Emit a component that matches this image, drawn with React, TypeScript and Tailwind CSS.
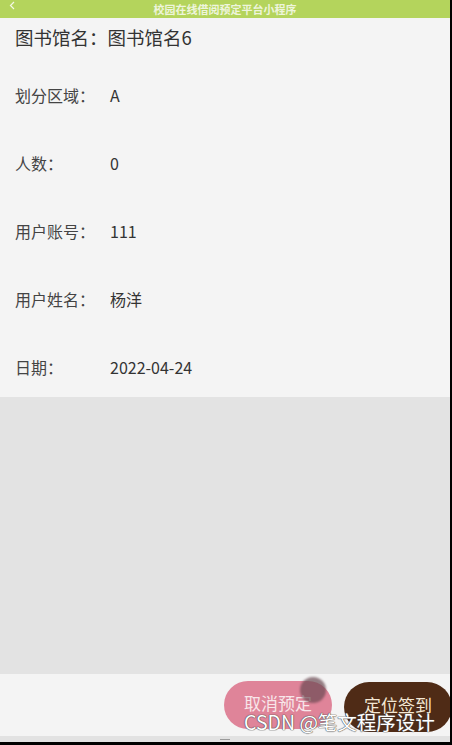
import React from "react";

const FONT = { fontFamily: '"Noto Sans CJK SC", "Noto Sans", sans-serif' };
const SERIF = { fontFamily: '"Liberation Serif", "Noto Sans CJK SC", serif' };

const rows: [string, string][] = [
  ["划分区域：", "A"],
  ["人数：", "0"],
  ["用户账号：", "111"],
  ["用户姓名：", "杨洋"],
  ["日期：", "2022-04-24"],
];

export default function App() {
  return (
    <div className="flex h-[745px] w-[452px] overflow-hidden bg-black" style={FONT}>
      <div className="relative flex w-[450px] flex-col">
        {/* Title bar */}
        <header className="relative flex h-[18px] items-center justify-center bg-[#b4d45c]">
          <svg className="absolute left-[8px] top-[1px]" width="9" height="9" viewBox="0 0 9 9">
            <path d="M6 1 L2.5 4.5 L6 8" fill="none" stroke="#f4f8e6" strokeWidth="1.2" />
          </svg>
          <span className="text-[11px] font-bold leading-none text-[#eef5dc]">校园在线借阅预定平台小程序</span>
        </header>

        {/* Details */}
        <section className="h-[379px] overflow-hidden bg-[#f4f4f4] px-[15px] text-[#333]">
          <h1 className="mt-[8px] text-[18.5px] leading-[22px]">图书馆名：图书馆名6</h1>
          <div className="mt-[13px]">
            {rows.map(([label, value]) => (
              <div key={label} className="flex h-[68px] items-center text-[16px]">
                <span className="w-[95px] text-[#444]">{label}</span>
                <span>{value}</span>
              </div>
            ))}
          </div>
        </section>

        <div className="flex-1 bg-[#e3e3e3]" />

        {/* Bottom actions */}
        <footer className="flex h-[62px] items-center justify-end gap-[12px] overflow-hidden bg-[#f4f4f4]">
          <button className="h-[48px] w-[108px] rounded-full bg-[#df8499] text-[17px] text-[#f8e6ea]" style={SERIF}>
            取消预定
          </button>
          <button className="-mr-[2px] mt-[3px] h-[50px] w-[108px] rounded-full bg-[#4f2b16] text-[17px] text-[#f3e7d4]" style={SERIF}>
            定位签到
          </button>
        </footer>
        <div className="flex h-[6px] justify-center bg-[#e2e2e2]">
          <div className="mt-[3px] h-[1px] w-[10px] bg-[#9a9a9a]" />
        </div>
        <div className="h-[3px] bg-black" />

        {/* touch indicator */}
        <div className="absolute left-[300px] top-[677px] h-[26px] w-[26px] rounded-full bg-[#6b4a52]/70 blur-[1px]" />

        {/* watermark */}
        <div
          className="absolute left-[244px] top-[709px] text-[19.5px] leading-[26px] text-white"
          style={{ textShadow: "0 0 1px #555, 0 0 1px #555, 0 0 1px #555" }}
        >
          CSDN @笔文程序设计
        </div>
      </div>
      <div className="w-[2px] bg-black" />
    </div>
  );
}
